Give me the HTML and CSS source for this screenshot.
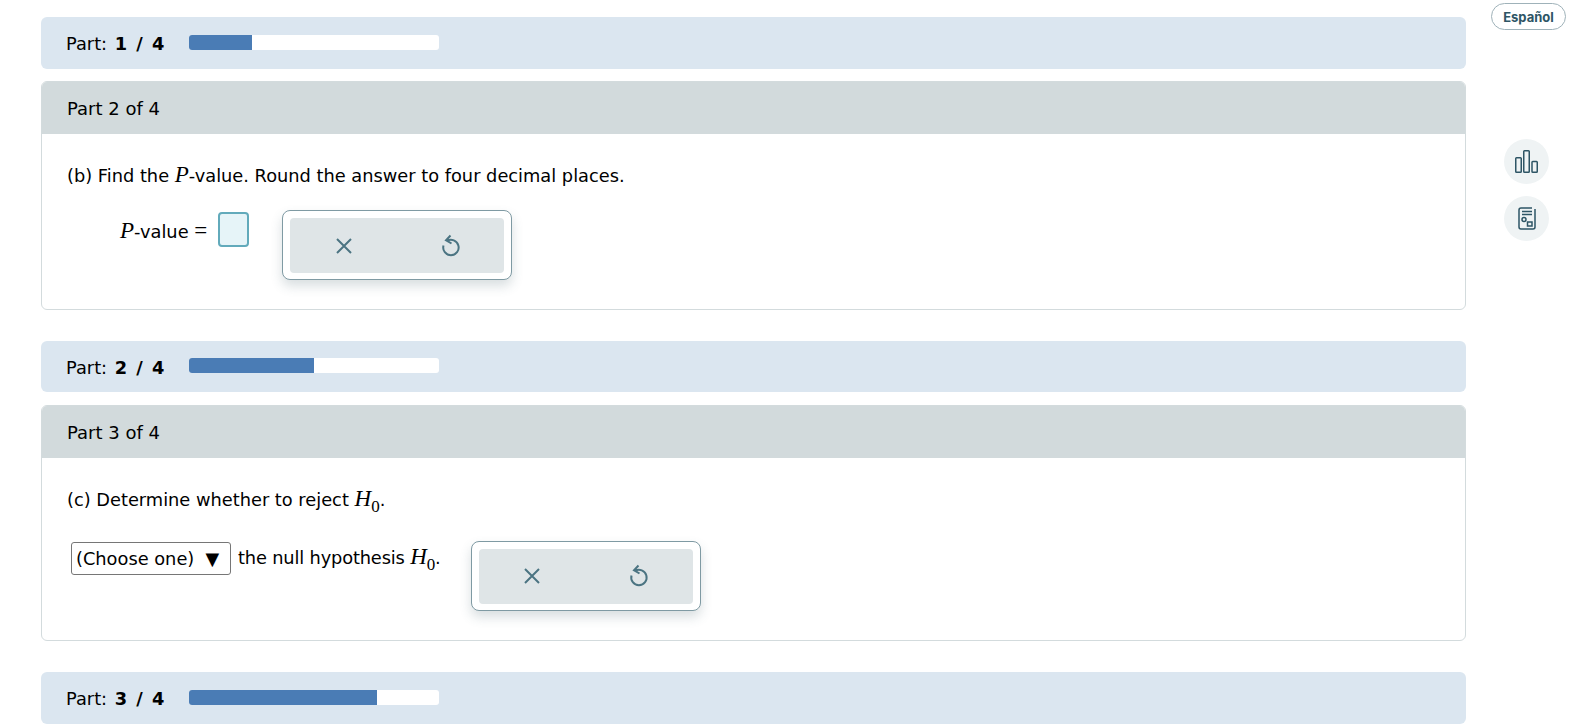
FILE: index.html
```html
<!DOCTYPE html>
<html lang="en">
<head>
    <meta charset="UTF-8">
    <title>Part 2 of 4</title>
    <link rel="stylesheet" href="styles.css">
</head>
<body>
    <div class="page">
        <main class="questions">
            <div class="progress">
                <span class="progress-label">Part: <b>1 / 4</b></span>
                <div class="progress-track"><div class="progress-fill" style="width: 25%"></div></div>
            </div>
            <section class="part">
                <div class="part-head">Part 2 of 4</div>
                <div class="part-body">
                    <p class="prompt">(b) Find the <i class="math">P</i>-value. Round the answer to four decimal places.</p>
                    <div class="answer answer-pvalue">
                        <span class="answer-label"><i class="math">P</i>-value <span class="math-op">=</span></span>
                        <input class="answer-input" type="text" aria-label="P-value">
                        <div class="tools">
                            <div class="tools-inner">
                                <button class="tool-btn" aria-label="Clear">
                                    <svg width="22" height="24" viewBox="0 0 22 24"><path d="M4 5l14 14M18 5L4 19"/></svg>
                                </button>
                                <button class="tool-btn" aria-label="Undo">
                                    <svg width="22" height="24" viewBox="0 0 22 24"><path d="M7 6.900A7.700 7.700 0 1 1 3.500 11.500M10.500 1.500L6 6.200l5.500 3.300"/></svg>
                                </button>
                            </div>
                        </div>
                    </div>
                </div>
            </section>

            <div class="progress">
                <span class="progress-label">Part: <b>2 / 4</b></span>
                <div class="progress-track"><div class="progress-fill" style="width: 50%"></div></div>
            </div>
            <section class="part">
                <div class="part-head">Part 3 of 4</div>
                <div class="part-body">
                    <p class="prompt">(c) Determine whether to reject <i class="math">H</i><sub class="math-sub">0</sub>.</p>
                    <div class="answer answer-reject">
                        <select class="choose" aria-label="Choose one"><option>(Choose one)&nbsp;&nbsp;▼</option></select>
                        <span class="answer-text">the null hypothesis <i class="math">H</i><sub class="math-sub">0</sub>.</span>
                        <div class="tools">
                            <div class="tools-inner">
                                <button class="tool-btn" aria-label="Clear">
                                    <svg width="22" height="24" viewBox="0 0 22 24"><path d="M4 5l14 14M18 5L4 19"/></svg>
                                </button>
                                <button class="tool-btn" aria-label="Undo">
                                    <svg width="22" height="24" viewBox="0 0 22 24"><path d="M7 6.900A7.700 7.700 0 1 1 3.500 11.500M10.500 1.500L6 6.200l5.500 3.300"/></svg>
                                </button>
                            </div>
                        </div>
                    </div>
                </div>
            </section>

            <div class="progress">
                <span class="progress-label">Part: <b>3 / 4</b></span>
                <div class="progress-track"><div class="progress-fill" style="width: 75%"></div></div>
            </div>
        </main>

        <aside class="rail">
            <button class="lang">Español</button>
            <div class="rail-tools">
                <button class="round-btn" aria-label="Data">
                    <svg width="23" height="23" viewBox="0 0 23 23"><rect x=".75" y="7.750" width="5.500" height="14.500" rx=".8"/><rect x="8.750" y=".75" width="5.500" height="21.500" rx=".8"/><rect x="17" y="11.500" width="5.250" height="10.750" rx=".8"/></svg>
                </button>
                <button class="round-btn" aria-label="Calculator">
                    <svg width="18" height="23" viewBox="0 0 18 23"><path d="M14 1H3a2 2 0 0 0-2 2v17a2 2 0 0 0 2 2h12a2 2 0 0 0 2-2V2M4 4.500h10M4 7.500h10"/><circle cx="6" cy="12.500" r="2"/><rect x="9.500" y="15" width="4.500" height="4"/></svg>
                </button>
            </div>
        </aside>
    </div>
</body>
</html>
```

FILE: styles.css
```css
* {
    box-sizing: border-box;
}
body {
    margin: 0;
    background: #fff;
    color: #000;
    font-family: "DejaVu Sans", Verdana, sans-serif;
    font-size: 17.8px;
    overflow: hidden;
}
.page {
    display: flex;
    height: 728px;
    padding-left: 41px;
}
.questions {
    width: 1425px;
    padding-top: 17px;
}
.progress {
    display: flex;
    align-items: center;
    height: 51.500px;
    padding-left: 25px;
    background: #dbe6f0;
    border-radius: 6px;
}
.progress-label {
    width: 123px;
    padding-top: 2px;
}
.progress-label b {
    margin-left: 2px;
    word-spacing: 3px;
}
.progress-track {
    width: 250px;
    height: 15px;
    margin-bottom: 1px;
    background: #fff;
    border-radius: 3px;
    overflow: hidden;
}
.progress-fill {
    height: 100%;
    background: #4a7cb5;
}
.part {
    margin: 12.500px 0 30.500px;
    padding-bottom: 29px;
    border: 1px solid #d3dbdd;
    border-radius: 6px;
    overflow: hidden;
}
.part:last-of-type {
    margin-bottom: 31.500px;
}
.part-head {
    display: flex;
    align-items: center;
    height: 53px;
    margin: -1px -1px 0;
    padding: 2px 0 0 26px;
    background: #d2dadc;
    font-size: 18px;
}
.part-body {
    padding: 31px 25px 0;
}
.prompt {
    margin: 0;
    line-height: 22px;
}
.math {
    font-family: "Liberation Serif", serif;
    font-size: 23px;
    font-style: italic;
    line-height: 0;
}
.math-op {
    font-family: "Liberation Serif", serif;
    font-size: 23px;
    line-height: 0;
}
.math-sub {
    font-family: "Liberation Serif", serif;
    font-size: 17px;
    line-height: 0;
    vertical-align: -6px;
}
.answer {
    display: flex;
    align-items: flex-start;
}
.answer-pvalue {
    margin-top: 23px;
    padding-left: 53px;
}
.answer-label {
    margin-top: 11px;
    line-height: 22px;
}
.answer-input {
    width: 31px;
    height: 35px;
    margin: 2px 0 0 11px;
    background: #e6f4f8;
    border: 2px solid #62aabb;
    border-radius: 4px;
    outline: none;
}
.tools {
    flex: none;
    width: 230px;
    height: 70px;
    padding: 7px 7px 6px;
    background: #fff;
    border: 1px solid #7f9aa3;
    border-radius: 8px;
    box-shadow: 0 6px 12px rgba(60, 90, 100, .2);
}
.answer-pvalue .tools {
    margin-left: 33px;
}
.answer-reject {
    margin-top: 29px;
    padding-left: 4px;
}
.answer-reject .tools {
    margin: 1px 0 0 30px;
}
.tools-inner {
    display: flex;
    height: 100%;
    background: #dfe5e7;
    border-radius: 4px;
}
.tool-btn {
    flex: 1;
    display: flex;
    align-items: center;
    justify-content: center;
    padding: 0;
    background: none;
    border: 0;
}
.tool-btn svg {
    fill: none;
    stroke: #4b7482;
    stroke-width: 2;
}
.choose {
    width: 160px;
    height: 33px;
    margin-top: 2px;
    padding: 0 0 0 4px;
    font-family: inherit;
    font-size: 17.8px;
    color: #000;
    background: #fff;
    border: 1px solid #767676;
    border-radius: 3px;
    appearance: none;
}
.answer-text {
    margin: 7px 0 0 7px;
    letter-spacing: -.15px;
    line-height: 22px;
}
.rail {
    flex: 1;
    display: flex;
    flex-direction: column;
    align-items: flex-end;
    padding: 3px 14px 0 0;
}
.lang {
    width: 75px;
    height: 27px;
    padding: 1px 0 0;
    font-family: Inter, sans-serif;
    font-size: 13px;
    font-weight: 700;
    color: #2e5565;
    background: #fff;
    border: 1px solid #9fb2b9;
    border-radius: 14px;
}
.rail-tools {
    display: flex;
    flex-direction: column;
    gap: 12px;
    margin: 109px 17px 0 0;
}
.round-btn {
    display: flex;
    align-items: center;
    justify-content: center;
    width: 45px;
    height: 45px;
    padding: 0;
    background: #eff3f4;
    border: 0;
    border-radius: 50%;
}
.round-btn svg {
    fill: none;
    stroke: #2e5565;
    stroke-width: 1.5;
}
```
